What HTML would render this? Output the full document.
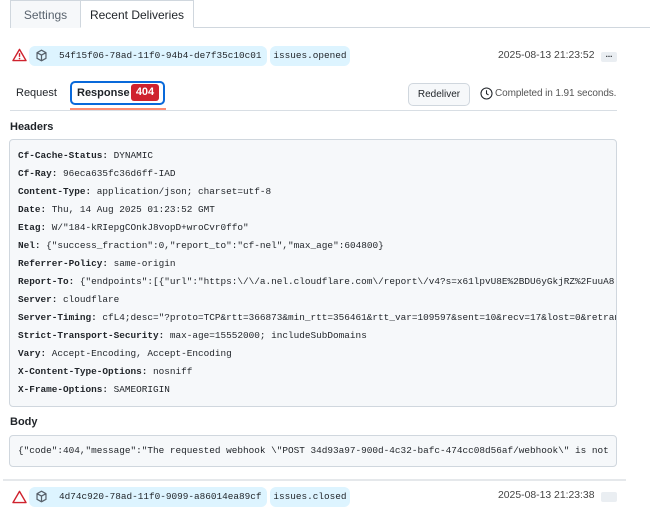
<!DOCTYPE html>
<html><head><style>
*{box-sizing:border-box;margin:0;padding:0}
body{width:650px;height:500px;overflow:hidden;background:#fff;font-family:"Liberation Sans",sans-serif;color:#1f2328;position:relative}
.abs{position:absolute}
.mono{font-family:"Liberation Mono",monospace}
.tabline{left:10px;top:27px;width:640px;height:1px;background:#d0d7de}
.tab{top:0;height:28px;font-size:12px;line-height:28px;text-align:center}
.pill{background:#ddf4ff;border-radius:6px;height:20px;font-size:9.4px;line-height:20px;color:#1f2328}
.box{background:#f6f8fa;border:1px solid #d0d7de;border-radius:4px;overflow:hidden}
.hl{position:absolute;left:8px;font-size:9.4px;white-space:nowrap;line-height:12px;color:#1f2328}
.hl b{font-weight:bold}
</style></head><body>
<div class="abs tabline"></div>
<div class="abs tab" style="left:10px;width:70px;color:#59636e;background:#f6f8fa;border:1px solid #d0d7de;border-bottom:none;border-right:none">Settings</div>
<div class="abs tab" style="left:80px;width:114px;background:#fff;border:1px solid #d0d7de;border-bottom:1px solid #fff;height:28px">Recent Deliveries</div>

<svg class="abs" style="left:12px;top:48px" width="15" height="14" viewBox="0 0 16 15"><path d="M8 1.5L15 13.5H1Z" fill="none" stroke="#cf222e" stroke-width="1.5" stroke-linejoin="round"/><path d="M8 5.5v4" stroke="#cf222e" stroke-width="1.5"/><circle cx="8" cy="11.3" r=".9" fill="#cf222e"/></svg>
<div class="abs pill" style="left:29px;top:46px;width:238px"></div>
<svg class="abs" style="left:35px;top:49px" width="13" height="13" viewBox="0 0 16 16"><path d="M8 1.5l5.5 3v7L8 14.5l-5.5-3v-7z M2.5 4.5L8 7.5l5.5-3 M8 7.5v7" fill="none" stroke="#57606a" stroke-width="1.5" stroke-linejoin="round"/></svg>
<div class="abs mono" style="left:59px;top:46px;font-size:9.4px;line-height:20px;color:#1f2328">54f15f06-78ad-11f0-94b4-de7f35c10c01</div>
<div class="abs pill mono" style="left:270px;top:46px;width:80px;text-align:center">issues.opened</div>
<div class="abs" style="left:498px;top:50px;font-size:10.4px;color:#444">2025-08-13 21:23:52</div>
<div class="abs" style="left:601px;top:52px;width:16px;height:10px;background:#eaeef2;border-radius:2px;font-size:8px;line-height:6px;text-align:center;font-weight:bold">...</div>

<div class="abs" style="left:16px;top:87px;font-size:11px">Request</div>
<div class="abs" style="left:70px;top:81px;width:95px;height:24px;border:2px solid #0969da;border-radius:5px"></div>
<div class="abs" style="left:77px;top:87px;font-size:11px;font-weight:bold">Response</div>
<div class="abs" style="left:131px;top:84px;width:28px;height:17px;background:#cf222e;color:#fff;font-size:11px;font-weight:bold;line-height:17px;text-align:center;border-radius:3px">404</div>
<div class="abs" style="left:70px;top:108px;width:96px;height:2px;background:#fd8c73"></div>
<div class="abs" style="left:10px;top:110px;width:607px;height:1px;background:#d8dee4"></div>

<div class="abs" style="left:408px;top:83px;width:62px;height:23px;border:1px solid #d0d7de;border-radius:5px;background:#f6f8fa;font-size:10px;line-height:21px;text-align:center">Redeliver</div>
<svg class="abs" style="left:480px;top:87px" width="13" height="13" viewBox="0 0 16 16"><circle cx="8" cy="8" r="6.8" fill="none" stroke="#1f2328" stroke-width="1.3"/><path d="M8 4v4.3l2.5 1.5" fill="none" stroke="#1f2328" stroke-width="1.3"/></svg>
<div class="abs" style="left:495px;top:88px;font-size:10px;color:#555;letter-spacing:-0.1px">Completed in 1.91 seconds.</div>

<div class="abs" style="left:10px;top:121px;font-size:11px;font-weight:bold">Headers</div>
<div class="abs box" style="left:9px;top:139px;width:608px;height:268px">
<div class="hl mono" style="top:10px"><b>Cf-Cache-Status:</b> DYNAMIC</div>
<div class="hl mono" style="top:28px"><b>Cf-Ray:</b> 96eca635fc36d6ff-IAD</div>
<div class="hl mono" style="top:46px"><b>Content-Type:</b> application/json; charset=utf-8</div>
<div class="hl mono" style="top:64px"><b>Date:</b> Thu, 14 Aug 2025 01:23:52 GMT</div>
<div class="hl mono" style="top:82px"><b>Etag:</b> W/"184-kRIepgCOnkJ8vopD+wroCvr0ffo"</div>
<div class="hl mono" style="top:100px"><b>Nel:</b> {"success_fraction":0,"report_to":"cf-nel","max_age":604800}</div>
<div class="hl mono" style="top:118px"><b>Referrer-Policy:</b> same-origin</div>
<div class="hl mono" style="top:136px"><b>Report-To:</b> {"endpoints":[{"url":"https:\/\/a.nel.cloudflare.com\/report\/v4?s=x61lpvU8E%2BDU6yGkjRZ%2FuuA8</div>
<div class="hl mono" style="top:154px"><b>Server:</b> cloudflare</div>
<div class="hl mono" style="top:172px"><b>Server-Timing:</b> cfL4;desc="?proto=TCP&amp;rtt=366873&amp;min_rtt=356461&amp;rtt_var=109597&amp;sent=10&amp;recv=17&amp;lost=0&amp;retrans</div>
<div class="hl mono" style="top:190px"><b>Strict-Transport-Security:</b> max-age=15552000; includeSubDomains</div>
<div class="hl mono" style="top:208px"><b>Vary:</b> Accept-Encoding, Accept-Encoding</div>
<div class="hl mono" style="top:226px"><b>X-Content-Type-Options:</b> nosniff</div>
<div class="hl mono" style="top:244px"><b>X-Frame-Options:</b> SAMEORIGIN</div>
</div>

<div class="abs" style="left:10px;top:416px;font-size:11px;font-weight:bold">Body</div>
<div class="abs box" style="left:9px;top:435px;width:608px;height:32px">
<div class="hl mono" style="top:9px">{"code":404,"message":"The requested webhook \"POST 34d93a97-900d-4c32-bafc-474cc08d56af/webhook\" is not</div>
</div>
<div class="abs" style="left:3px;top:479px;width:623px;height:2px;background:#e5e8eb"></div>

<svg class="abs" style="left:12px;top:490px" width="15" height="14" viewBox="0 0 16 15"><path d="M8 1.5L15 13.5H1Z" fill="none" stroke="#cf222e" stroke-width="1.5" stroke-linejoin="round"/></svg>
<div class="abs pill" style="left:29px;top:487px;width:238px"></div>
<svg class="abs" style="left:35px;top:490px" width="13" height="13" viewBox="0 0 16 16"><path d="M8 1.5l5.5 3v7L8 14.5l-5.5-3v-7z M2.5 4.5L8 7.5l5.5-3 M8 7.5v7" fill="none" stroke="#57606a" stroke-width="1.5" stroke-linejoin="round"/></svg>
<div class="abs mono" style="left:59px;top:487px;font-size:9.4px;line-height:20px">4d74c920-78ad-11f0-9099-a86014ea89cf</div>
<div class="abs pill mono" style="left:270px;top:487px;width:80px;text-align:center">issues.closed</div>
<div class="abs" style="left:498px;top:490px;font-size:10.4px;color:#444">2025-08-13 21:23:38</div>
<div class="abs" style="left:601px;top:492px;width:16px;height:10px;background:#eaeef2;border-radius:2px"></div>
</body></html>
